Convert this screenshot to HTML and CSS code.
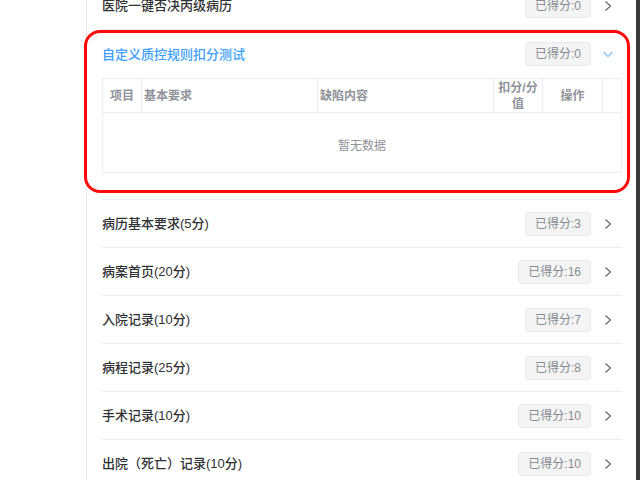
FILE: index.html
```html
<!DOCTYPE html>
<html lang="zh-CN">
<head>
<meta charset="utf-8">
<title>质控评分</title>
<link rel="stylesheet" href="styles.css">
</head>
<body>
<div class="page">
  <aside class="side"></aside>
  <main class="main">
    <div class="collapse">
      <div class="item">
        <div class="head">
          <span class="title">医院一键否决丙级病历</span>
          <span class="tag">已得分:0</span>
          <span class="arrow"><svg width="12" height="12" viewBox="0 0 12 12"><path d="M3.5 1.5 L8.5 6 L3.5 10.5" fill="none" stroke="#606266" stroke-width="1.1"/></svg></span>
        </div>
      </div>
      <div class="item open">
        <div class="head">
          <span class="title active">自定义质控规则扣分测试</span>
          <span class="tag">已得分:0</span>
          <span class="arrow"><svg width="12" height="12" viewBox="0 0 12 12"><path d="M1.5 4 L6 8.5 L10.5 4" fill="none" stroke="#79bbff" stroke-width="1.1"/></svg></span>
        </div>
        <div class="content">
          <div class="tbl">
            <div class="thead">
              <div class="th center">项目</div>
              <div class="th">基本要求</div>
              <div class="th">缺陷内容</div>
              <div class="th center">扣分/分值</div>
              <div class="th center">操作</div>
              <div class="th gutter"></div>
            </div>
            <div class="empty">暂无数据</div>
          </div>
        </div>
      </div>
      <div class="item">
        <div class="head">
          <span class="title">病历基本要求(5分)</span>
          <span class="tag">已得分:3</span>
          <span class="arrow"><svg width="12" height="12" viewBox="0 0 12 12"><path d="M3.5 1.5 L8.5 6 L3.5 10.5" fill="none" stroke="#606266" stroke-width="1.1"/></svg></span>
        </div>
      </div>
      <div class="item">
        <div class="head">
          <span class="title">病案首页(20分)</span>
          <span class="tag">已得分:16</span>
          <span class="arrow"><svg width="12" height="12" viewBox="0 0 12 12"><path d="M3.5 1.5 L8.5 6 L3.5 10.5" fill="none" stroke="#606266" stroke-width="1.1"/></svg></span>
        </div>
      </div>
      <div class="item">
        <div class="head">
          <span class="title">入院记录(10分)</span>
          <span class="tag">已得分:7</span>
          <span class="arrow"><svg width="12" height="12" viewBox="0 0 12 12"><path d="M3.5 1.5 L8.5 6 L3.5 10.5" fill="none" stroke="#606266" stroke-width="1.1"/></svg></span>
        </div>
      </div>
      <div class="item">
        <div class="head">
          <span class="title">病程记录(25分)</span>
          <span class="tag">已得分:8</span>
          <span class="arrow"><svg width="12" height="12" viewBox="0 0 12 12"><path d="M3.5 1.5 L8.5 6 L3.5 10.5" fill="none" stroke="#606266" stroke-width="1.1"/></svg></span>
        </div>
      </div>
      <div class="item">
        <div class="head">
          <span class="title">手术记录(10分)</span>
          <span class="tag">已得分:10</span>
          <span class="arrow"><svg width="12" height="12" viewBox="0 0 12 12"><path d="M3.5 1.5 L8.5 6 L3.5 10.5" fill="none" stroke="#606266" stroke-width="1.1"/></svg></span>
        </div>
      </div>
      <div class="item">
        <div class="head">
          <span class="title">出院（死亡）记录(10分)</span>
          <span class="tag">已得分:10</span>
          <span class="arrow"><svg width="12" height="12" viewBox="0 0 12 12"><path d="M3.5 1.5 L8.5 6 L3.5 10.5" fill="none" stroke="#606266" stroke-width="1.1"/></svg></span>
        </div>
      </div>
    </div>
  </main>
  <div class="scrollbar"></div>
</div>
<div class="annot"></div>
</body>
</html>
```
FILE: styles.css
```css
html, body {
  margin: 0;
  padding: 0;
  background: #ffffff;
}
body {
  font-family: "Liberation Sans", "Noto Sans CJK SC", sans-serif;
  color: #303133;
  width: 640px;
  height: 480px;
  overflow: hidden;
  position: relative;
}
.page {
  display: flex;
  height: 480px;
  overflow: hidden;
}
.side {
  width: 86px;
  flex: none;
  border-right: 1px solid #e6e6e6;
}
.main {
  flex: 1;
  padding: 0 14px 0 15px;
  overflow: hidden;
}
.scrollbar {
  width: 4px;
  flex: none;
  background: #3a3a3a;
}
.collapse {
  margin-top: -18px;
  width: 520px;
}
.item {
  border-bottom: 1px solid #ebeef5;
}
.head {
  display: flex;
  align-items: center;
  height: 47px;
  font-size: 13px;
}
.item.open .head {
  height: 48px;
}
.title {
  flex: 1;
  white-space: nowrap;
  font-weight: 500;
  padding-bottom: 2px;
}
.title.active {
  color: #409eff;
}
.tag {
  box-sizing: border-box;
  height: 24px;
  line-height: 22px;
  padding: 0 9px;
  border: 1px solid #e9e9eb;
  background: #f4f4f5;
  color: #86898f;
  font-size: 12px;
  border-radius: 4px;
  white-space: nowrap;
}
.arrow {
  width: 12px;
  height: 12px;
  margin-left: 11px;
  margin-right: 8px;
  display: flex;
}
.content {
  padding-bottom: 26px;
}
.tbl {
  border: 1px solid #ebeef5;
}
.thead {
  display: grid;
  grid-template-columns: 39px 176px 176px 49px 60px 1fr;
  height: 34px;
  box-sizing: border-box;
  border-bottom: 1px solid #ebeef5;
}
.th {
  box-sizing: border-box;
  border-right: 1px solid #ebeef5;
  display: flex;
  align-items: center;
  padding: 0 2px;
  font-size: 12px;
  font-weight: bold;
  color: #909399;
  line-height: 16px;
}
.th.center {
  justify-content: center;
  text-align: center;
  padding: 0 4px;
}
.th.gutter {
  border-right: none;
}
.empty {
  height: 59px;
  box-sizing: border-box;
  padding-top: 4px;
  display: flex;
  align-items: center;
  justify-content: center;
  font-size: 12px;
  color: #909399;
}
.annot {
  position: absolute;
  left: 84px;
  top: 30px;
  width: 546px;
  height: 163px;
  box-sizing: border-box;
  border: 3px solid #ff0a0a;
  border-radius: 16px;
  pointer-events: none;
}
```
